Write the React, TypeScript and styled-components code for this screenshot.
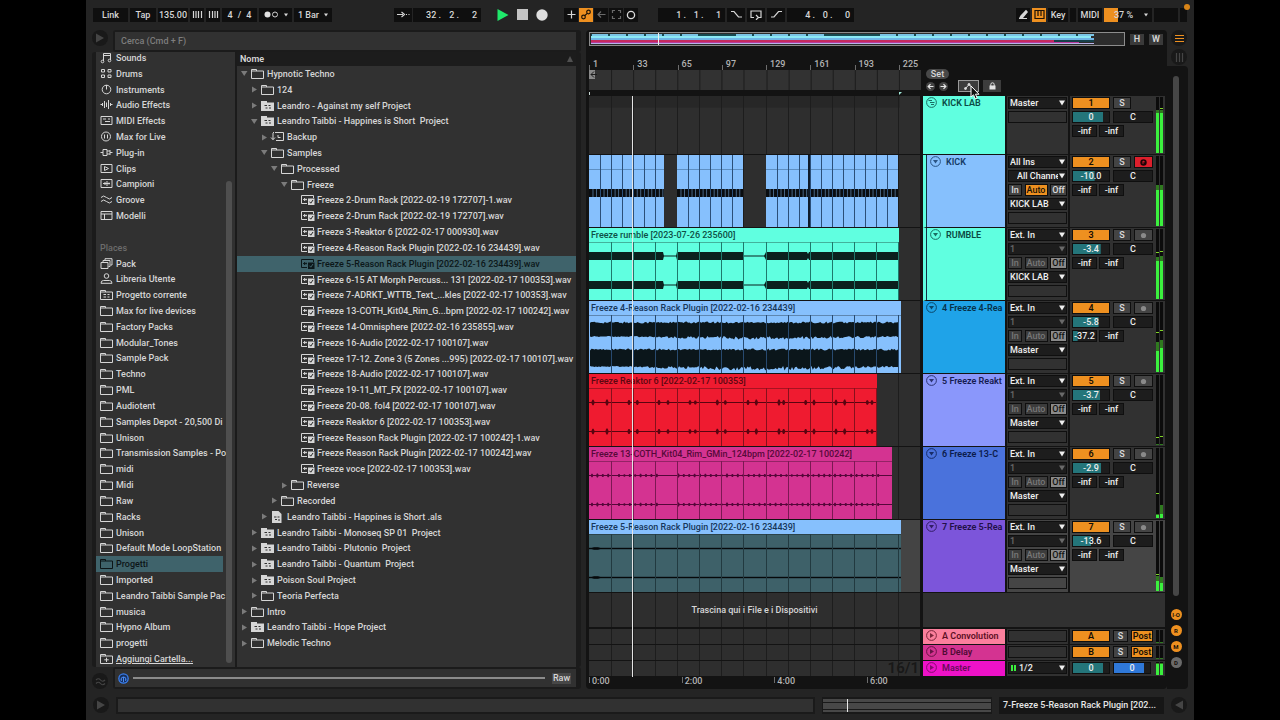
import React from "react";
import styled, { createGlobalStyle, css } from "styled-components";

const c = {
  page: "#242424",
  well: "#161616",
  deep: "#0f0f0f",
  surface: "#313131",
  line: "#191919",
  text: "#d6d6d6",
  dim: "#6c6c6c",
  orange: "#ee9020",
  teal: "#24757a",
  select: "#3f636b",
};

const Global = createGlobalStyle`
  * { box-sizing: border-box; }
  html, body { margin: 0; background: #000; }
  body, button, input, select {
    font-family: Roboto, "Liberation Sans", sans-serif;
    font-size: 9px;
    line-height: 12px;
    font-weight: 500;
    color: ${c.text};
  }
  button, input, select { border: 0; margin: 0; padding: 0; background: none; border-radius: 0; appearance: none; outline: 0; }
  ul { list-style: none; margin: 0; padding: 0; }
  a { color: inherit; text-decoration: none; }
  svg { display: block; flex: none; }
`;

const Page = styled.div`
  background: #000;
  min-height: 100vh;
  padding: 0 86px;
  display: flex;
`;
const Window = styled.div`
  flex: 1;
  min-width: 0;
  background: ${c.page};
  display: flex;
  flex-direction: column;
  position: relative;
`;

/* ---------- Transport bar ---------- */
const Toolbar = styled.header`
  height: 29px;
  padding: 0 7px;
  display: flex;
  align-items: center;
`;
const Group = styled.div<{ $gap?: number; $before?: string }>`
  display: flex;
  align-items: center;
  gap: ${(p) => p.$gap ?? 2}px;
  margin-left: ${(p) => p.$before ?? 0};
`;
const ToolButton = styled.button<{ $w: number; $on?: boolean; $dim?: boolean }>`
  width: ${(p) => p.$w}px;
  height: 14px;
  display: flex;
  align-items: center;
  justify-content: center;
  gap: 5px;
  background: ${(p) => (p.$on ? c.orange : c.deep)};
  color: ${(p) => (p.$on ? "#1c1206" : p.$dim ? "#6a6a6a" : "#d6d6d6")};
`;
const Position = styled.div<{ $w: number }>`
  width: ${(p) => p.$w}px;
  height: 14px;
  padding: 0 4px 0 0;
  background: ${c.deep};
  display: grid;
  grid-template-columns: 28px 1fr 1fr;
  align-items: center;
  text-align: right;
`;
const Bare = styled.button`
  display: flex;
`;
const Cpu = styled.div`
  width: 48px;
  height: 14px;
  padding: 0 4px 0 10px;
  display: flex;
  align-items: center;
  justify-content: space-between;
  background: linear-gradient(${c.orange}, ${c.orange}) left / 14px 100% no-repeat ${c.deep};
`;
const Led = styled.span`
  position: absolute;
  top: 4px;
  right: 4px;
  width: 6px;
  height: 6px;
  border-radius: 50%;
  background: #d98518;
`;

/* ---------- Browser ---------- */
const Main = styled.main`
  flex: 1;
  display: flex;
  gap: 5px;
  padding: 1px 6px 0;
  min-height: 0;
`;
const Browser = styled.section`
  width: 489px;
  flex: none;
  display: flex;
  flex-direction: column;
  padding-bottom: 4px;
`;
const BarRow = styled.div<{ $end?: boolean }>`
  display: flex;
  gap: 5px;
  align-items: ${(p) => (p.$end ? "flex-end" : "flex-start")};
`;
const RoundButton = styled.button<{ $lit?: boolean }>`
  width: 16px;
  height: 16px;
  border-radius: 50%;
  background: #191919;
  color: ${(p) => (p.$lit ? c.orange : "#454545")};
  display: flex;
  align-items: center;
  justify-content: center;
  flex: none;
`;
const BarWell = styled.div`
  flex: 1;
  background: #1b1b1b;
  border-radius: 3px;
  padding: 2px 5px 2px 2px;
  display: flex;
`;
const Search = styled.input`
  flex: 1;
  height: 18px;
  padding: 0 6px;
  background: ${c.surface};
  &::placeholder { color: #7d7d7d; opacity: 1; }
`;
const BrowserBody = styled.div`
  flex: 1;
  display: flex;
  gap: 2px;
  padding: 0 5px 0 4px;
  background: #1b1b1b;
  border-radius: 3px;
`;
const Sidebar = styled.nav`
  width: 139px;
  background: ${c.surface};
  overflow: hidden;
  display: flex;
  gap: 3px;
`;
const PlaceList = styled.ul`
  width: 127px;
  margin-top: -2px;
  display: grid;
  grid-template-rows: repeat(39, minmax(12px, 1fr));
`;
const Place = styled.li<{ $on?: boolean; $head?: boolean }>`
  display: flex;
  align-items: center;
  padding: 0 3px 0 4px;
  min-width: 0;
  background: ${(p) => (p.$on ? c.select : "none")};
  color: ${(p) => (p.$on ? "#0d1517" : p.$head ? c.dim : c.text)};
`;
const PlaceLink = styled.a<{ $underline?: boolean }>`
  display: flex;
  align-items: center;
  gap: 3px;
  min-width: 0;
  white-space: nowrap;
  span { text-decoration: ${(p) => (p.$underline ? "underline" : "none")}; }
`;
const SideScroll = styled.div`
  width: 6px;
  margin: 129px 0 4px;
  border-radius: 3px;
  background: #4f4f4f;
`;
const Files = styled.div`
  flex: 1;
  min-width: 0;
  background: ${c.surface};
  display: flex;
  flex-direction: column;
`;
const FilesHead = styled.div`
  height: 14px;
  padding: 0 3px;
  display: flex;
  align-items: center;
  justify-content: space-between;
  background: #1c1c1c;
  font-weight: 600;
`;
const Tree = styled.ul`
  flex: 1;
  display: grid;
  grid-template-rows: repeat(38, minmax(12px, 1fr));
`;
const TreeRow = styled.li<{ $level: number; $on?: boolean }>`
  display: flex;
  align-items: center;
  padding-left: ${(p) => 4 + p.$level * 10}px;
  white-space: pre;
  background: ${(p) => (p.$on ? c.select : "none")};
  color: ${(p) => (p.$on ? "#0c1719" : c.text)};
`;
const Twisty = styled.button`
  width: 10px;
  height: 10px;
  display: flex;
  align-items: center;
  color: #7b7b7b;
`;
const FileName = styled.button`
  display: flex;
  align-items: center;
  gap: 3px;
  color: inherit;
  white-space: pre;
`;
const Preview = styled.div`
  flex: 1;
  height: 18px;
  padding: 0 5px 0 3px;
  display: flex;
  align-items: center;
  gap: 4px;
  background: ${c.surface};
`;
const PreviewLine = styled.div`
  flex: 1;
  height: 2px;
  margin-right: 3px;
  background: #8b8b8b;
`;
const RawButton = styled.button`
  width: 19px;
  height: 11px;
  line-height: 11px;
  background: #474747;
`;

/* ---------- Arrangement ---------- */
const Arrange = styled.section`
  flex: 1;
  min-width: 0;
  display: flex;
  flex-direction: column;
  background: #131313;
  border-radius: 4px;
  padding: 2px 2px 0 3px;
  margin-bottom: 4px;
`;
const OverviewRow = styled.div`
  display: flex;
  align-items: center;
  gap: 5px;
  padding-right: 2px;
  height: 14px;
`;
const Overview = styled.div`
  flex: 1;
  height: 14px;
  border: 1px solid #8c8c8c;
  background: #2c2c2c;
  overflow: hidden;
  svg { width: 100%; height: 100%; }
`;
const SquareButton = styled.button`
  width: 14px;
  height: 11px;
  line-height: 11px;
  background: #3a3a3a;
  font-weight: 600;
`;
const Columns = styled.div`
  display: grid;
  grid-template-columns: minmax(0, 1fr) 82px 61px 95px;
  column-gap: 2px;
`;
const TopArea = styled(Columns)`
  margin-top: 12px;
  height: 38px;
`;
const RulerCol = styled.div`
  display: flex;
  flex-direction: column;
`;
const Ruler = styled.div`
  display: grid;
  grid-template-columns: repeat(15, 1fr);
  height: 12px;
  color: #b4b4b4;
`;
const RulerMark = styled.span<{ $i: number }>`
  grid-column: ${(p) => p.$i * 2 + 1} / span ${(p) => (p.$i === 7 ? 1 : 2)};
  height: 12px;
  padding-left: 4px;
  line-height: 12px;
  white-space: nowrap;
  background: linear-gradient(#6d6d6d, #6d6d6d) left bottom / 1px 5px no-repeat;
`;
const Scrub = styled.div`
  height: 20px;
  position: relative;
  background: #323232;
`;
const GridSvg = styled.svg`
  position: absolute;
  inset: 0;
  width: 100%;
  height: 100%;
`;
const LoopMark = styled.span`
  position: absolute;
  left: 0;
  top: 0;
`;
const EndMarks = styled.div`
  height: 6px;
  padding-top: 2px;
  display: flex;
  justify-content: space-between;
  margin-right: 19px;
`;
const SetArea = styled.div`
  grid-column: 2 / span 3;
  padding: 11px 0 0 3px;
  display: flex;
  flex-direction: column;
  gap: 1px;
`;
const SetButton = styled.button`
  align-self: flex-start;
  width: 23px;
  height: 10px;
  line-height: 10px;
  border-radius: 5px;
  background: #484848;
`;
const SetRow = styled.div`
  display: flex;
  align-items: center;
  gap: 4px;
`;
const NavDot = styled.button`
  width: 9px;
  height: 9px;
  border-radius: 50%;
  background: #444;
  display: flex;
  align-items: center;
  justify-content: center;
`;
const ModeButton = styled.button<{ $on?: boolean }>`
  width: ${(p) => (p.$on ? 21 : 18)}px;
  height: 12px;
  margin-left: ${(p) => (p.$on ? 6 : 0)}px;
  border: ${(p) => (p.$on ? "1px solid #9a9a9a" : "0")};
  background: #3c3c3c;
  display: flex;
  align-items: center;
  justify-content: center;
  position: relative;
`;
const Cursor = styled.span`
  position: absolute;
  left: 11px;
  top: 4px;
  z-index: 5;
`;
const Tracks = styled.div`
  position: relative;
  flex: 1;
  display: flex;
  flex-direction: column;
`;
const TrackRow = styled(Columns)<{ $h: number }>`
  min-height: ${(p) => p.$h}px;
  padding-bottom: 1px;
`;
const Lane = styled.div<{ $sel?: boolean }>`
  position: relative;
  margin-right: 1px;
  background: ${(p) => (p.$sel ? "#444" : "#2e2e2e")};
`;
const GhostClips = styled.div`
  width: 94%;
  height: 12px;
  border-bottom: 1px solid #292929;
  background: #272727;
`;
const Clip = styled.div<{ $bars: number; $bg: string }>`
  position: relative;
  width: ${(p) => (p.$bars / 331) * 100}%;
  height: 100%;
  display: flex;
  flex-direction: column;
  background: ${(p) => p.$bg};
`;
const ClipTitle = styled.div<{ $bg?: string; $ink: string }>`
  height: 14px;
  padding: 0 2px;
  line-height: 14px;
  white-space: nowrap;
  overflow: hidden;
  color: ${(p) => p.$ink};
  background: ${(p) => p.$bg ?? "none"};
  box-shadow: 0 1px 0 rgba(0, 0, 0, 0.3);
`;
const ClipBody = styled.div`
  flex: 1;
  min-height: 0;
  position: relative;
`;
const Head = styled.div<{ $bg: string; $nested?: boolean; $ink: string }>`
  background: ${(p) => p.$bg};
  color: ${(p) => p.$ink};
  margin-bottom: ${(p) => (p.$nested ? -1 : 0)}px;
  ${(p) =>
    p.$nested &&
    css`
      border-left: 3px solid #5effe0;
      box-shadow: inset 1px 0 0 #134;
      border-bottom: 1px solid #131313;
    `}
  padding: 1px 3px 0 ${(p) => (p.$nested ? 4 : 3)}px;
  display: flex;
  align-items: flex-start;
  gap: 5px;
  overflow: hidden;
  white-space: nowrap;
  font-weight: 600;
`;
const IoCol = styled.div<{ $sel?: boolean }>`
  background: ${(p) => (p.$sel ? "#454545" : c.surface)};
  padding: 1px;
  display: flex;
  flex-direction: column;
  gap: 2px;
`;
const SelectBox = styled.label<{ $off?: boolean; $indent?: boolean }>`
  position: relative;
  height: 12px;
  border: 1px solid ${c.deep};
  background: #1d1d1d;
  display: flex;
  align-items: center;
  color: ${(p) => (p.$off ? "#6a6a6a" : "#f0f0f0")};
  select {
    flex: 1;
    min-width: 0;
    height: 10px;
    line-height: 10px;
    padding-left: ${(p) => (p.$indent ? 8 : 1)}px;
    color: inherit;
    opacity: 1;
    text-overflow: clip;
  }
  svg { margin: 0 1px; }
`;
const EmptyBox = styled.div`
  height: 12px;
  border: 1px solid ${c.deep};
`;
const OutputLevel = styled.span`
  width: 5px;
  height: 6px;
  margin: 0 2px;
  border: solid #3bf03e;
  border-width: 0 2px;
`;
const Monitor = styled.div`
  display: grid;
  grid-template-columns: 14px 23px 17px;
  justify-content: space-between;
  height: 12px;
`;
const MonitorButton = styled.button<{ $state: "plain" | "on" | "off" | "lit" }>`
  height: 12px;
  line-height: 10px;
  border: 1px solid ${c.deep};
  white-space: nowrap;
  background: ${(p) => ({ plain: "#444", on: c.orange, off: "#3c3c3c", lit: "#8a8a8a" })[p.$state]};
  color: ${(p) => ({ plain: "#ddd", on: "#1a1206", off: "#777", lit: "#111" })[p.$state]};
  display: flex;
  justify-content: center;
`;
const MixCol = styled.div<{ $sel?: boolean }>`
  background: ${(p) => (p.$sel ? "#454545" : c.surface)};
  display: flex;
  justify-content: space-between;
  padding: 1px 2px 0 2px;
`;
const MixGrid = styled.div`
  display: grid;
  grid-template-columns: 38px 18px 19px;
  grid-auto-rows: 12px;
  gap: 2px 3px;
  align-content: start;
`;
const MixButton = styled.button<{ $kind?: "on" | "arm" }>`
  height: 12px;
  line-height: 10px;
  border: 1px solid ${c.deep};
  background: ${(p) => (p.$kind === "on" ? c.orange : p.$kind === "arm" ? "#dd1f2c" : "#444")};
  color: ${(p) => (p.$kind ? "#140d04" : "#d8d8d8")};
  font-weight: 600;
  display: flex;
  align-items: center;
  justify-content: center;
`;
const ValueBox = styled.input<{ $fill?: number; $hue?: string; $wide?: boolean }>`
  width: 100%;
  height: 12px;
  line-height: 10px;
  border: 1px solid ${c.deep};
  text-align: center;
  color: #ededed;
  grid-column: ${(p) => (p.$wide ? "span 2" : "auto")};
  background: linear-gradient(${(p) => p.$hue ?? c.teal}, ${(p) => p.$hue ?? c.teal}) left / ${(p) => p.$fill ?? 0}% 100% no-repeat #1d1d1d;
`;
const Sends = styled.div`
  grid-column: 1 / -1;
  display: grid;
  grid-template-columns: 25px 25px;
  gap: 2px;
`;
const Meter = styled.div`
  display: grid;
  grid-template-columns: 3px 3px;
  gap: 1px;
  margin-bottom: 1px;
`;
const MeterBar = styled.span<{ $peak: number; $level: number; $hold: number }>`
  background: linear-gradient(
      to top,
      #3bf03e ${(p) => p.$level}%,
      #2f7a1f ${(p) => p.$level}% ${(p) => p.$peak}%,
      #0b0b0b ${(p) => p.$peak}% ${(p) => p.$hold}%,
      #7fd428 ${(p) => p.$hold}% ${(p) => p.$hold + 1}%,
      #0b0b0b ${(p) => p.$hold + 1}%
    );
`;
const DropRow = styled.div`
  height: 34px;
  display: grid;
  grid-template-columns: minmax(0, 1fr) 242px;
  gap: 2px;
  margin-bottom: 2px;
`;
const DropText = styled.p`
  position: relative;
  margin: 0;
  line-height: 34px;
  text-align: center;
`;
const Panel = styled.div`
  background: ${c.surface};
`;
const ReturnRow = styled(Columns)`
  height: 16px;
  padding-bottom: 1px;
`;
const GridLabel = styled.span`
  position: absolute;
  right: 1px;
  bottom: 0;
  font-size: 15px;
  line-height: 15px;
  font-weight: 600;
  color: #181818;
`;
const ReturnMix = styled.div<{ $master?: boolean }>`
  display: grid;
  grid-template-columns: ${(p) => (p.$master ? "38px 38px" : "38px 15px 22px")};
  gap: 3px;
`;
const ReturnCol = styled(MixCol)`
  padding-top: 1px;
`;
const TimeRuler = styled.div`
  display: grid;
  grid-template-columns: repeat(3, 28%) 1fr;
  margin-right: 245px;
  height: 12px;
  color: #b4b4b4;
`;
const TimeMark = styled.span`
  border-left: 1px solid #6d6d6d;
  height: 6px;
  padding-left: 2px;
  line-height: 9px;
`;
const Playhead = styled.div`
  position: absolute;
  top: 0;
  bottom: 12px;
  left: calc((100% - 244px) * 0.13);
  width: 1px;
  background: #e4e4e4;
`;

/* ---------- Right rail ---------- */
const Rail = styled.aside`
  width: 21px;
  margin-left: -5px;
  margin-bottom: 4px;
  display: flex;
  flex-direction: column;
`;
const RailTop = styled.div`
  height: 36px;
  padding-right: 1px;
  display: flex;
  flex-direction: column;
  align-items: flex-end;
  gap: 3px;
`;
const RailBody = styled.div`
  flex: 1;
  background: #131313;
  border-radius: 0 4px 4px 0;
  display: flex;
  flex-direction: column;
  align-items: center;
  gap: 5px;
  padding: 10px 3px 21px 0;
`;
const RailScroll = styled.div`
  flex: 1;
  width: 6px;
  margin-bottom: 8px;
  border-radius: 3px;
  background: #464646;
`;
const RailToggle = styled.button<{ $on?: boolean }>`
  width: 11px;
  height: 11px;
  border-radius: 50%;
  background: ${(p) => (p.$on ? c.orange : "#6a6a6a")};
  color: #17100a;
  font-size: 6px;
  line-height: 11px;
  font-weight: 700;
`;

/* ---------- Status bar ---------- */
const Status = styled.footer`
  height: 28px;
  padding: 0 7px 4px;
  display: flex;
  align-items: center;
  gap: 7px;
`;
const InfoBox = styled.div`
  flex: 1;
  height: 17px;
  background: ${c.surface};
  border: 2px solid #1a1a1a;
`;
const ClipOverview = styled.div`
  width: 170px;
  height: 17px;
  padding: 2px 1px;
  background: #191919;
  svg { width: 100%; height: 100%; }
`;
const DeviceName = styled.div`
  width: 165px;
  height: 17px;
  padding: 0 4px;
  line-height: 17px;
  background: #161616;
  color: #e6e6e6;
  white-space: nowrap;
`;

/* ---------- Icons ---------- */
type IconKind =
  | "notes" | "drums" | "knob" | "audiofx" | "midifx" | "max" | "plug" | "clips" | "samples" | "groove" | "templates"
  | "pack" | "user" | "current" | "folder" | "project" | "add" | "backup" | "wav" | "als";

const folderPath = "M.5 10.500V1.500H5.500V3M.500 3H12.500V10.500H.500";

const Icon = ({ kind, inverse }: { kind: IconKind; inverse?: boolean }) => {
  const shapes: Record<IconKind, React.ReactNode> = {
    notes: <><path d="M3.500 9V1.500H10.500V8M3.500 3.500H10.500" /><circle cx="2.500" cy="9.500" r="1.300" /><circle cx="9.500" cy="8.500" r="1.300" /></>,
    drums: <path d="M1.500 1.500H4.500V4H1.500ZM8 1.500H11V4H8ZM1.500 7H4.500V9.500H1.500ZM8 7H11V9.500H8Z" />,
    knob: <><circle cx="6.500" cy="5.500" r="4.300" /><path d="M6.500 1V5.500" /></>,
    audiofx: <path d="M.5 5.500H2.500M2.500 4V7M4.500 2V9M6.500 3.500V8M8.500 1V10M10.500 4V7M10.500 5.500H12.500" />,
    midifx: <path d="M1 1.500H12V9.500H1ZM3 4H6M5 6.500H10M8 4H10" />,
    max: <path d="M1.500 5.500A4.500 4.500 0 0 1 10.500 5.500A4.500 4.500 0 0 1 1.500 5.500M4.500 3.500V7.500M7.500 3.500V7.500" />,
    plug: <path d="M.5 5.500H3M3 2.500H7V8.500H3ZM7 4H10M7 7H10M10 3V8M10 5.500H12.500" />,
    clips: <path d="M1 1.500H12V9.500H1ZM4.500 3.500V7.500L8.500 5.500Z" />,
    samples: <path d="M1 1.500H12V9.500H1ZM3 5.500H10M5 4V7M7 3V8M9 4.500V6.500" />,
    groove: <path d="M1 3.500Q3.500 .5 6.500 3.500T12 3.500M1 7.500Q3.500 4.500 6.500 7.500T12 7.500" />,
    templates: <path d="M1 1.500H12V9.500H1ZM1 4H12M4.500 4V9.500" />,
    pack: <path d="M1 4.500H8V10.500H1ZM3 4V2.500H10V8.500H8.500M5 2V.7H12V7H10.500" />,
    user: <><circle cx="6.500" cy="3" r="2.300" /><path d="M1 10.300Q1 7.500 3.500 7.500H9.500Q12 7.500 12 10.300Z" /></>,
    current: <><path d={folderPath} /><path d="M3.500 5.500H6M3.500 8H6M7.500 5.500H9.500M7.500 8H9.500" /></>,
    folder: <path d={folderPath} />,
    project: <><path d="M0 11V1H6V2.500H13V11Z" fill="currentColor" stroke="none" /><path d="M3.500 5.500H6M4.500 8H6.500M7.500 5.500H9.500M8 8H10" stroke="#313131" /></>,
    add: <><path d={folderPath} /><path d="M6.500 4.700V9M4.300 6.800H8.700" /></>,
    backup: <path d="M4 1.500H12.500V9.500H5M7 4V6.500H9.500M2 2V8.500M0 6.500L2 8.700L4 6.500M2 1.500H3" />,
    wav: <><path d="M6 9.500H.5V1.500H12.500V4" /><path d="M2 5.500H6M3.500 4V7M5 4.500V6.500" strokeWidth="0.900" /><rect x="7" y="4.500" width="6.500" height="6.500" fill="currentColor" stroke="none" /><path d="M8.500 7.700L9.800 9.200L12 6" stroke={inverse ? c.select : "#262626"} /></>,
    als: <><path d="M1 0H7.500L10.500 3V12H1Z" fill="currentColor" stroke="none" /><path d="M3 6H5.500M6.500 6H8.500M4 8.500H6M7 9H9" stroke="#313131" /></>,
  };
  return (
    <svg width="13" height="12" viewBox="0 0 13 12" fill="none" stroke="currentColor" strokeWidth="1" overflow="visible" aria-hidden="true">
      {shapes[kind]}
    </svg>
  );
};

const Caret = ({ open }: { open?: boolean }) => (
  <svg width="7" height="7" viewBox="0 0 7 7" fill="currentColor" aria-hidden="true">
    {open ? <path d="M0 1H6.500L3.200 6Z" /> : <path d="M1 .5L6 3.500L1 6.500Z" />}
  </svg>
);
const Down = ({ size = 6 }: { size?: number }) => (
  <svg width={size} height={size} viewBox="0 0 5 5" fill="currentColor" aria-hidden="true">
    <path d="M0 .5H5L2.500 4.500Z" />
  </svg>
);
const PlaySmall = ({ flip }: { flip?: boolean }) => (
  <svg width="10" height="10" viewBox="0 0 10 10" fill="currentColor" aria-hidden="true">
    <path d={flip ? "M9 .5L1 5L9 9.500Z" : "M1 .5L9 5L1 9.500Z"} />
  </svg>
);
const TrackFold = ({ kind }: { kind: "group" | "down" | "right" }) => (
  <svg width="11" height="11" viewBox="0 0 11 11" fill="none" stroke="currentColor" strokeWidth="1" opacity="0.800" aria-hidden="true">
    <circle cx="5.500" cy="5.500" r="4.900" />
    {kind === "group" && <path d="M2.500 3.500H6M4 5.500H8.500M5 7.500H8" />}
    {kind === "down" && <path d="M3 4H8L5.500 7.500Z" fill="currentColor" stroke="none" />}
    {kind === "right" && <path d="M4 3L8 5.500L4 8Z" fill="currentColor" stroke="none" />}
  </svg>
);
const Glyph = ({ d, w = 11, fill }: { d: string; w?: number; fill?: boolean }) => (
  <svg width={w} height="11" viewBox={`0 0 ${w} 11`} fill={fill ? "currentColor" : "none"} stroke={fill ? "none" : "currentColor"} strokeWidth="1.200" aria-hidden="true">
    <path d={d} />
  </svg>
);

/* ---------- Data ---------- */
type PlaceItem = { icon: IconKind; label: string; on?: boolean };
const categories: PlaceItem[] = [
  { icon: "notes", label: "Sounds" }, { icon: "drums", label: "Drums" }, { icon: "knob", label: "Instruments" },
  { icon: "audiofx", label: "Audio Effects" }, { icon: "midifx", label: "MIDI Effects" }, { icon: "max", label: "Max for Live" },
  { icon: "plug", label: "Plug-in" }, { icon: "clips", label: "Clips" }, { icon: "samples", label: "Campioni" },
  { icon: "groove", label: "Groove" }, { icon: "templates", label: "Modelli" },
];
const places: PlaceItem[] = [
  { icon: "pack", label: "Pack" }, { icon: "user", label: "Libreria Utente" }, { icon: "current", label: "Progetto corrente" },
  ...["Max for live devices", "Factory Packs", "Modular_Tones", "Sample Pack", "Techno", "PML", "Audiotent", "Samples Depot - 20,500 Di",
    "Unison", "Transmission Samples - Po", "midi", "Midi", "Raw", "Racks", "Unison", "Default Mode LoopStation", "Progetti", "Imported",
    "Leandro Taibbi Sample Pac", "musica", "Hypno Album", "progetti"].map((label) => ({ icon: "folder" as IconKind, label, on: label === "Progetti" })),
];

type Node = { level: number; icon: IconKind; label: string; open?: boolean; on?: boolean };
const wavs = [
  "Freeze 2-Drum Rack [2022-02-19 172707]-1.wav", "Freeze 2-Drum Rack [2022-02-19 172707].wav", "Freeze 3-Reaktor 6 [2022-02-17 000930].wav",
  "Freeze 4-Reason Rack Plugin [2022-02-16 234439].wav", "Freeze 5-Reason Rack Plugin [2022-02-16 234439].wav",
  "Freeze 6-15 AT Morph Percuss... 131 [2022-02-17 100353].wav", "Freeze 7-ADRKT_WTTB_Text_...kles [2022-02-17 100353].wav",
  "Freeze 13-COTH_Kit04_Rim_G...bpm [2022-02-17 100242].wav", "Freeze 14-Omnisphere [2022-02-16 235855].wav",
  "Freeze 16-Audio [2022-02-17 100107].wav", "Freeze 17-12. Zone 3 (5 Zones ...995) [2022-02-17 100107].wav",
  "Freeze 18-Audio [2022-02-17 100107].wav", "Freeze 19-11_MT_FX [2022-02-17 100107].wav", "Freeze 20-08. fol4 [2022-02-17 100107].wav",
  "Freeze Reaktor 6 [2022-02-17 100353].wav", "Freeze Reason Rack Plugin [2022-02-17 100242]-1.wav",
  "Freeze Reason Rack Plugin [2022-02-17 100242].wav", "Freeze voce [2022-02-17 100353].wav",
];
const nodes: Node[] = [
  { level: 0, icon: "folder", label: "Hypnotic Techno", open: true },
  { level: 1, icon: "folder", label: "124" },
  { level: 1, icon: "project", label: "Leandro - Against my self Project" },
  { level: 1, icon: "project", label: "Leandro Taibbi - Happines is Short  Project", open: true },
  { level: 2, icon: "backup", label: "Backup" },
  { level: 2, icon: "folder", label: "Samples", open: true },
  { level: 3, icon: "folder", label: "Processed", open: true },
  { level: 4, icon: "folder", label: "Freeze", open: true },
  ...wavs.map((label, i) => ({ level: 5, icon: "wav" as IconKind, label, on: i === 4 })),
  { level: 4, icon: "folder", label: "Reverse" },
  { level: 3, icon: "folder", label: "Recorded" },
  { level: 2, icon: "als", label: "Leandro Taibbi - Happines is Short .als" },
  { level: 1, icon: "project", label: "Leandro Taibbi - Monoseq SP 01  Project" },
  { level: 1, icon: "project", label: "Leandro Taibbi - Plutonio  Project" },
  { level: 1, icon: "project", label: "Leandro Taibbi - Quantum  Project" },
  { level: 1, icon: "project", label: "Poison Soul Project" },
  { level: 1, icon: "folder", label: "Teoria Perfecta" },
  { level: 0, icon: "folder", label: "Intro" },
  { level: 0, icon: "project", label: "Leandro Taibbi - Hope Project" },
  { level: 0, icon: "folder", label: "Melodic Techno" },
];

/* ---------- Waveforms (lane units: 331 across) ---------- */
const CELL = 331 / 15;
const noise = (i: number) => {
  const v = Math.sin(i * 127.1) * 43758.5453;
  return v - Math.floor(v);
};
const GridLines = ({ w = 331, color = "#1d1d1d" }: { w?: number; color?: string }) => (
  <GridSvg viewBox={`0 0 ${w} 10`} preserveAspectRatio="none" aria-hidden="true">
    {Array.from({ length: 14 }, (_, i) => (i + 1) * CELL).filter((x) => x < w).map((x) => (
      <rect key={x} x={Math.round(x)} y="0" width="1" height="10" fill={color} />
    ))}
  </GridSvg>
);
const Wave = ({ w, children }: { w: number; children: React.ReactNode }) => (
  <GridSvg viewBox={`0 0 ${w} 58`} preserveAspectRatio="none" aria-hidden="true">{children}</GridSvg>
);
const denseBand = (w: number, top: number, bottom: number, amp: number, seed: number) => {
  const n = Math.floor(w / 1.5);
  const up: string[] = [];
  const down: string[] = [];
  for (let i = 0; i <= n; i++) {
    const x = ((i / n) * (w - 3) + 1).toFixed(1);
    up.push(`${x} ${(top - noise(i + seed) * 2).toFixed(1)}`);
    const swell = Math.max(0, Math.sin(((i / n) - 0.12) * 3.6)) * amp;
    down.unshift(`${x} ${(bottom + noise(i * 3 + seed) * (1.2 + swell)).toFixed(1)}`);
  }
  return `M${up.join("L")}L${down.join("L")}Z`;
};
const blips = (y: number, xs: number[], h: number, w: number) =>
  xs.map((x, i) => {
    const k = h * (0.6 + noise(i + 3) * 0.4);
    return `M${x - w} ${y}L${x - w / 3} ${y - k}L${x + w / 3} ${y - k}L${x + w} ${y}L${x + w / 3} ${y + k}L${x - w / 3} ${y + k}Z`;
  }).join("");

const RumbleWave = () => (
  <Wave w={310}>
    {[14, 43].map((y) => (
      <g key={y} fill="#0b211e">
        <rect x="0" y={y - 0.5} width="310" height="1" />
        <path d={`M0 ${y - 4}H74L75 ${y}L74 ${y + 4}H0ZM87 ${y}L88 ${y - 4}H154V${y + 4}H88ZM175 ${y}L177 ${y - 4}H218L219 ${y - 2}L220 ${y - 4}H310V${y + 4}H220L219 ${y + 2}L218 ${y + 4}H177Z`} />
      </g>
    ))}
  </Wave>
);
const ReasonWave = () => (
  <Wave w={312}>
    <g fill="#0b161b">
      <path d={denseBand(312, 8.5, 21, 2.5, 1)} />
      <path d={denseBand(312, 35.5, 51, 3.5, 40)} />
    </g>
  </Wave>
);
const hits = [40, 82, 148, 173, 238, 265, 331, 347, 413, 437, 505, 530, 598, 612, 678, 703, 769, 795, 863, 877].map((x) => (x - 28) / 3);
const ReaktorWave = () => (
  <Wave w={288}>
    {[14.5, 43.5].map((y) => (
      <g key={y} fill="#5a0410">
        <rect x="0" y={y - 0.5} width="288" height="1" />
        <path d={blips(y, hits, 3.2, 1.8)} />
      </g>
    ))}
  </Wave>
);
const ticks = Array.from({ length: 54 }, (_, i) => 3 + i * 5.4).filter((x) => (x < 22 || x > 28) && (x < 70 || x > 88));
const RimWave = () => (
  <Wave w={303}>
    {[14.5, 43.5].map((y) => (
      <g key={y} fill="#56073a">
        <rect x="0" y={y - 0.5} width="303" height="1" />
        <path d={blips(y, ticks, 2, 1.5)} />
      </g>
    ))}
  </Wave>
);
const FlatWave = () => (
  <Wave w={312}>
    {[14.5, 43.5].map((y) => (
      <g key={y} fill="#06090a">
        <rect x="0" y={y - 0.7} width="312" height="1.400" />
        <path d={blips(y, [7], 1.5, 6)} />
      </g>
    ))}
  </Wave>
);
const kickGroups: [number, number][] = [[0, 75], [88, 154], [177, 309]];
const KickClips = () => (
  <GridSvg viewBox="0 0 331 72" preserveAspectRatio="none" aria-hidden="true">
    {kickGroups.map(([a, b]) => (
      <g key={a}>
        <rect x={a} y="0" width={b - a} height="72" fill="#86c0fd" />
        <rect x={a} y="14" width={b - a} height="1" fill="#5d8fc2" />
        <rect x={a} y="34" width={b - a} height="8" fill="#0a0d10" />
        {Array.from({ length: Math.floor((b - a) / 3.7) }, (_, i) => (
          <rect key={i} x={a + (i + 1) * 3.68} y="34" width="0.600" height="8" fill="#6f9fd0" />
        ))}
        {Array.from({ length: Math.floor((b - a - 4) / 11) }, (_, i) => (
          <rect key={i} x={Math.round(a + (i + 1) * 11.04)} y="0" width="1" height="72" fill="#2b4f78" />
        ))}
      </g>
    ))}
    <rect x="219" y="0" width="2" height="72" fill="#0f1b2a" />
  </GridSvg>
);
const OverviewDrawing = () => (
  <svg viewBox="0 0 534 12" preserveAspectRatio="none" aria-hidden="true">
    <rect x="1" y="1" width="502" height="2" fill="#174a50" />
    {Array.from({ length: 28 }, (_, i) => i * 18).filter((x) => x < 100 || (x > 130 && x < 230) || x > 280).map((x) => (
      <rect key={x} x={x + 2} y="1" width="16" height="2" fill="#7ac4e6" />
    ))}
    <rect x="1" y="3" width="500" height="2" fill="#8be9f5" />
    <rect x="1" y="5" width="503" height="2" fill="#6fb4e6" />
    <rect x="1" y="7" width="463" height="2" fill="#c42a5e" />
    <rect x="464" y="7" width="40" height="2" fill="#16404a" />
    <rect x="1" y="9" width="488" height="1" fill="#b83a9a" />
    <rect x="1" y="10" width="503" height="1" fill="#b9b3ea" />
    <rect x="68" y="0" width="1" height="12" fill="#f0f0f0" />
  </svg>
);

/* ---------- Tracks ---------- */
type Channel = { level: number; peak: number; hold: number };
type Track = {
  name: string; n: number; color: string; ink: string; h: number; fold: "group" | "down"; nested?: boolean; sel?: boolean;
  input?: string; channel?: string; live?: boolean; output: string; vol: string; fill: number; send?: string; meter: [Channel, Channel];
  clip?: { title: string; w: number; bg: string; head?: string; ink: string; wave: React.ReactNode; grid: string };
};
const tracks: Track[] = [
  { name: "KICK LAB", n: 1, color: "#60ffe0", ink: "#0b4a44", h: 59, fold: "group", output: "Master", vol: "0", fill: 84,
    meter: [{ level: 72, peak: 76, hold: 78 }, { level: 72, peak: 77, hold: 79 }] },
  { name: "KICK", n: 2, color: "#86c0fd", ink: "#143a66", h: 73, fold: "down", nested: true, input: "All Ins", channel: "All Channels", live: true,
    output: "KICK LAB", vol: "-10.0", fill: 60, meter: [{ level: 52, peak: 59, hold: 88 }, { level: 52, peak: 59, hold: 88 }] },
  { name: "RUMBLE", n: 3, color: "#60ffe0", ink: "#0b4a44", h: 73, fold: "down", nested: true, input: "Ext. In", output: "KICK LAB", vol: "-3.4", fill: 77,
    meter: [{ level: 54, peak: 60, hold: 66 }, { level: 54, peak: 62, hold: 67 }],
    clip: { title: "Freeze rumble [2023-07-26 235600]", w: 310, bg: "#60ffe0", ink: "#0e4f47", wave: <RumbleWave />, grid: "#1e7a6c" } },
  { name: "4 Freeze 4-Rea", n: 4, color: "#1fa3e8", ink: "#06314a", h: 73, fold: "down", input: "Ext. In", output: "Master", vol: "-5.8", fill: 71, send: "-37.2",
    meter: [{ level: 30, peak: 43, hold: 56 }, { level: 34, peak: 45, hold: 59 }],
    clip: { title: "Freeze 4-Reason Rack Plugin [2022-02-16 234439]", w: 312, bg: "#86c0fd", ink: "#16365a", wave: <ReasonWave />, grid: "#284a70" } },
  { name: "5 Freeze Reakt", n: 5, color: "#8a97fb", ink: "#161c52", h: 73, fold: "down", input: "Ext. In", output: "Master", vol: "-3.7", fill: 75,
    meter: [{ level: 0, peak: 2, hold: 10 }, { level: 0, peak: 2, hold: 12 }],
    clip: { title: "Freeze Reaktor 6 [2022-02-17 100353]", w: 288, bg: "#ef1b30", ink: "#5c0711", wave: <ReaktorWave />, grid: "#86101c" } },
  { name: "6 Freeze 13-C", n: 6, color: "#4a72dc", ink: "#0c1c4c", h: 73, fold: "down", input: "Ext. In", output: "Master", vol: "-2.9", fill: 78,
    meter: [{ level: 4, peak: 6, hold: 35 }, { level: 5, peak: 18, hold: 34 }],
    clip: { title: "Freeze 13-COTH_Kit04_Rim_GMin_124bpm [2022-02-17 100242]", w: 303, bg: "#d43391", ink: "#560a39", wave: <RimWave />, grid: "#7c1853" } },
  { name: "7 Freeze 5-Rea", n: 7, color: "#7c55da", ink: "#221048", h: 73, fold: "down", sel: true, input: "Ext. In", output: "Master", vol: "-13.6", fill: 50,
    meter: [{ level: 14, peak: 22, hold: 23 }, { level: 12, peak: 20, hold: 21 }],
    clip: { title: "Freeze 5-Reason Rack Plugin [2022-02-16 234439]", w: 312, bg: "#3e6169", head: "#86c0fd", ink: "#16365a", wave: <FlatWave />, grid: "#223a40" } },
];

const Dropdown = ({ value, label, off, indent, lead }: { value: string; label: string; off?: boolean; indent?: boolean; lead?: React.ReactNode }) => (
  <SelectBox $off={off} $indent={indent}>
    {lead}
    <select aria-label={label} defaultValue={value} disabled={off}>
      <option>{value}</option>
    </select>
    <Down />
  </SelectBox>
);

const Meters = ({ data }: { data: [Channel, Channel] }) => (
  <Meter>
    {data.map((m, i) => <MeterBar key={i} $level={m.level} $peak={m.peak} $hold={m.hold} />)}
  </Meter>
);

const TrackView = ({ t }: { t: Track }) => (
  <TrackRow $h={t.h}>
    <Lane $sel={t.sel}>
      {t.n === 1 && <GhostClips />}
      <GridLines />
      {t.n === 2 && <KickClips />}
      {t.clip && (
        <Clip $bars={t.clip.w} $bg={t.clip.bg}>
          <ClipTitle $bg={t.clip.head} $ink={t.clip.ink}>{t.clip.title}</ClipTitle>
          <ClipBody>
            {t.clip.wave}
            <GridLines w={t.clip.w} color={t.clip.grid} />
          </ClipBody>
        </Clip>
      )}
    </Lane>
    <Head $bg={t.color} $ink={t.ink} $nested={t.nested}>
      <TrackFold kind={t.fold} />
      {t.name}
    </Head>
    <IoCol $sel={t.sel}>
      {t.input && (
        <>
          <Dropdown label={`${t.name} input`} value={t.input} />
          <Dropdown label={`${t.name} channel`} value={t.channel ?? "1"} off={!t.live} indent={t.live} />
          <Monitor>
            <MonitorButton $state={t.live ? "plain" : "off"}>In</MonitorButton>
            <MonitorButton $state={t.live ? "on" : "off"}>Auto</MonitorButton>
            <MonitorButton $state={t.live ? "plain" : "lit"}>Off</MonitorButton>
          </Monitor>
        </>
      )}
      <Dropdown label={`${t.name} output`} value={t.output} />
      <EmptyBox />
    </IoCol>
    <MixCol $sel={t.sel}>
      <MixGrid>
        <MixButton $kind="on">{t.n}</MixButton>
        <MixButton>S</MixButton>
        {t.n === 1 ? <span /> : (
          <MixButton $kind={t.live ? "arm" : undefined} aria-label="Arm">
            <svg width="7" height="7" viewBox="0 0 7 7" aria-hidden="true">
              <circle cx="3.500" cy="3.500" r={t.live ? 3.2 : 2.6} fill={t.live ? "#1a0507" : "#8a8a8a"} />
              {t.live && <path d="M3 4.800V2L4.800 3" stroke="#dd1f2c" fill="none" />}
            </svg>
          </MixButton>
        )}
        <ValueBox aria-label="Volume" defaultValue={t.vol} $fill={t.fill} />
        <ValueBox aria-label="Pan" defaultValue="C" $wide />
        <Sends>
          <ValueBox aria-label="Send A" defaultValue={t.send ?? "-inf"} $fill={t.send ? 20 : 0} />
          <ValueBox aria-label="Send B" defaultValue="-inf" />
        </Sends>
      </MixGrid>
      <Meters data={t.meter} />
    </MixCol>
  </TrackRow>
);

const quiet: [Channel, Channel] = [{ level: 0, peak: 5, hold: 10 }, { level: 0, peak: 5, hold: 10 }];
const loud: [Channel, Channel] = [{ level: 85, peak: 92, hold: 95 }, { level: 85, peak: 92, hold: 95 }];

const ReturnView = ({ name, id, color, ink }: { name: string; id: string; color: string; ink: string }) => {
  const master = id === "M";
  return (
    <ReturnRow>
      <Lane>
        <GridLines />
        {master && <GridLabel>16/1</GridLabel>}
      </Lane>
      <Head $bg={color} $ink={ink}><TrackFold kind="right" />{name}</Head>
      <IoCol>{master ? <Dropdown label="Master output" value="1/2" lead={<OutputLevel />} /> : <EmptyBox />}</IoCol>
      <ReturnCol>
        <ReturnMix $master={master}>
          {master ? (
            <>
              <ValueBox aria-label="Master volume" defaultValue="0" $fill={84} />
              <ValueBox aria-label="Cue volume" defaultValue="0" $fill={84} $hue="#2f78d8" />
            </>
          ) : (
            <>
              <MixButton $kind="on">{id}</MixButton>
              <MixButton>S</MixButton>
              <MixButton $kind="on">Post</MixButton>
            </>
          )}
        </ReturnMix>
        <Meters data={master ? loud : quiet} />
      </ReturnCol>
    </ReturnRow>
  );
};

const TransportBar = () => (
  <Toolbar>
    <Group>
      <ToolButton $w={35}>Link</ToolButton>
      <ToolButton $w={26}>Tap</ToolButton>
      <ToolButton $w={30}>135.00</ToolButton>
      <ToolButton $w={14} aria-label="Nudge down"><Glyph d="M1.500 2V9M4 2V9M6.500 2V9M9.500 2V9" /></ToolButton>
      <ToolButton $w={14} aria-label="Nudge up"><Glyph d="M1.500 2V9M4.500 2V9M7 2V9M9.500 2V9" /></ToolButton>
      <ToolButton $w={35}><span>4</span><span>/</span><span>4</span></ToolButton>
      <ToolButton $w={33} aria-label="Metronome">
        <svg width="15" height="7" viewBox="0 0 15 7" aria-hidden="true">
          <circle cx="3.500" cy="3.500" r="3" fill="#e2e2e2" />
          <circle cx="11" cy="3.500" r="2.500" fill="none" stroke="#cfcfcf" />
        </svg>
        <Down size={4} />
      </ToolButton>
      <ToolButton $w={38}><span>1 Bar</span><Down size={4} /></ToolButton>
    </Group>
    <Group $gap={16} $before="62px">
      <Group $gap={1}>
        <ToolButton $w={18} aria-label="Follow"><Glyph w={13} d="M0 5.500H6M4.500 3L7.500 5.500L4.500 8M9 5.500H10M11.500 5.500H12.500" /></ToolButton>
        <Position $w={68}><span>32 .</span><span>2 .</span><span>2</span></Position>
      </Group>
      <Group $gap={8}>
        <Bare aria-label="Play"><svg width="12" height="12" viewBox="0 0 12 12"><path d="M0.500 0L11.500 6L.5 12Z" fill="#1fe86a" /></svg></Bare>
        <Bare aria-label="Stop"><svg width="11" height="11" viewBox="0 0 11 11"><path d="M0 0H11V11H0Z" fill="#c4c4c4" /></svg></Bare>
        <Bare aria-label="Record"><svg width="12" height="12" viewBox="0 0 12 12"><circle cx="6" cy="6" r="5.700" fill="#dedede" /></svg></Bare>
      </Group>
      <Group $gap={1}>
        <ToolButton $w={14} aria-label="Overdub"><Glyph d="M5.500 1.500V9.500M1.500 5.500H9.500" /></ToolButton>
        <ToolButton $w={14} $on aria-label="Automation arm">
          <svg width="12" height="11" viewBox="0 0 12 11" fill="none" stroke="currentColor" strokeWidth="1.200"><circle cx="3.500" cy="8" r="1.800" /><circle cx="8.500" cy="3" r="1.800" /><path d="M4.800 6.700L7.200 4.300" /></svg>
        </ToolButton>
        <ToolButton $w={14} $dim aria-label="Re-enable automation"><Glyph d="M9.500 5.500H2M5 2.500L2 5.500L5 8.500" /></ToolButton>
        <ToolButton $w={14} $dim aria-label="Capture MIDI"><Glyph d="M1.500 4V1.500H4M7 1.500H9.500V4M9.500 7V9.500H7M4 9.500H1.500V7" /></ToolButton>
        <ToolButton $w={14} aria-label="Session record"><svg width="10" height="10" viewBox="0 0 10 10"><circle cx="5" cy="5" r="3.600" fill="none" stroke="#dcdcdc" strokeWidth="1.300" /></svg></ToolButton>
      </Group>
    </Group>
    <Group $before="20px">
      <Position $w={67}><span>1 .</span><span>1 .</span><span>1</span></Position>
      <ToolButton $w={18} aria-label="Punch in"><Glyph d="M0 2.500H3L7.500 8H11" /></ToolButton>
      <ToolButton $w={18} aria-label="Loop"><Glyph w={12} d="M4 8.500H1V2H11V8.500H7.500M6 6L8.500 8.500L6 10.800" /></ToolButton>
      <ToolButton $w={18} aria-label="Punch out"><Glyph d="M0 8H3L7.500 2.500H11" /></ToolButton>
      <Position $w={67}><span>4 .</span><span>0 .</span><span>0</span></Position>
    </Group>
    <Group $before="auto">
      <ToolButton $w={14} aria-label="Draw mode"><Glyph d="M1 10H9V9H5L10 3L8 .8L2.500 6.500L1 9.200Z" fill /></ToolButton>
      <ToolButton $w={14} $on aria-label="MIDI keyboard"><Glyph d="M1 1.500H10V9.500H1ZM4 1.500V7M7 1.500V7" /></ToolButton>
      <ToolButton $w={20}>Key</ToolButton>
      <ToolButton $w={6} aria-label="Key in" />
      <ToolButton $w={24}>MIDI</ToolButton>
      <Cpu><span>37 %</span><Down size={4} /></Cpu>
      <ToolButton $w={24} aria-label="Disk" />
      <ToolButton $w={7} aria-label="MIDI out" />
    </Group>
  </Toolbar>
);

const BrowserView = () => (
  <Browser>
    <BarRow>
      <RoundButton aria-label="Hide browser"><PlaySmall /></RoundButton>
      <BarWell><Search type="search" placeholder="Cerca (Cmd + F)" aria-label="Cerca" /></BarWell>
    </BarRow>
    <BrowserBody>
      <Sidebar>
        <PlaceList>
          {categories.map((p) => (
            <Place key={p.label}><PlaceLink href="#"><Icon kind={p.icon} /><span>{p.label}</span></PlaceLink></Place>
          ))}
          <Place aria-hidden="true" />
          <Place $head>Places</Place>
          {places.map((p, i) => (
            <Place key={i} $on={p.on}><PlaceLink href="#"><Icon kind={p.icon} /><span>{p.label}</span></PlaceLink></Place>
          ))}
          <Place><PlaceLink href="#" $underline><Icon kind="add" /><span>Aggiungi Cartella...</span></PlaceLink></Place>
        </PlaceList>
        <SideScroll />
      </Sidebar>
      <Files>
        <FilesHead>Nome
          <svg width="6" height="6" viewBox="0 0 6 6" aria-hidden="true"><path d="M0 6L3 0L6 6Z" fill="#505050" /></svg>
        </FilesHead>
        <Tree>
          {nodes.map((n) => (
            <TreeRow key={n.label} $level={n.level} $on={n.on}>
              {n.icon === "wav" ? <Twisty as="span" /> : <Twisty aria-label="Expand"><Caret open={n.open} /></Twisty>}
              <FileName><Icon kind={n.icon} inverse={n.on} /><span>{n.label}</span></FileName>
            </TreeRow>
          ))}
        </Tree>
      </Files>
    </BrowserBody>
    <BarRow $end>
      <RoundButton aria-label="Groove pool"><Glyph d="M1 4Q3.500 1.500 5.500 4T10 4M1 7.500Q3.500 5 5.500 7.500T10 7.500" /></RoundButton>
      <BarWell>
        <Preview>
          <Bare aria-label="Preview">
            <svg width="11" height="11" viewBox="0 0 11 11"><circle cx="5.500" cy="5.500" r="5.300" fill="#3a7ff0" /><circle cx="5.500" cy="5.500" r="4" fill="#16305e" /><path d="M3 6.500A2.500 2.500 0 0 1 8 6.500M5.500 4V9M3.300 6V8M7.700 6V8" stroke="#4a8cf5" fill="none" /></svg>
          </Bare>
          <PreviewLine />
          <RawButton>Raw</RawButton>
        </Preview>
      </BarWell>
    </BarRow>
  </Browser>
);

const bars = ["1", "33", "65", "97", "129", "161", "193", "225"];

const ArrangeView = () => (
  <Arrange>
    <OverviewRow>
      <Overview><OverviewDrawing /></Overview>
      <SquareButton>H</SquareButton>
      <SquareButton>W</SquareButton>
    </OverviewRow>
    <TopArea>
      <RulerCol>
        <Ruler>
          {bars.map((b, i) => <RulerMark key={b} $i={i}>{b}</RulerMark>)}
        </Ruler>
        <Scrub>
          <GridLines />
          <LoopMark>
            <svg width="8" height="9" viewBox="0 0 8 9" aria-hidden="true"><path d="M0 0H6V9H0Z" fill="#8a8a8a" /><path d="M5 1.500L2 4.500L5 7.500M2 4.500H8" stroke="#1c1c1c" fill="none" /></svg>
          </LoopMark>
        </Scrub>
        <EndMarks aria-hidden="true">
          <svg width="1" height="3" viewBox="0 0 1 3"><path d="M0 0H1V3H0Z" fill="#c8d8d4" /></svg>
          <svg width="3" height="3" viewBox="0 0 3 3"><path d="M0 0H3L0 3Z" fill="#9fe8d8" /></svg>
        </EndMarks>
      </RulerCol>
      <SetArea>
        <SetButton>Set</SetButton>
        <SetRow>
          <NavDot aria-label="Previous locator"><svg width="7" height="7" viewBox="0 0 7 7" fill="none" stroke="#e8e8e8" strokeWidth="1.200"><path d="M6.500 3.500H1.500M3.500 1.200L1.200 3.500L3.500 5.800" /></svg></NavDot>
          <NavDot aria-label="Next locator"><svg width="7" height="7" viewBox="0 0 7 7" fill="none" stroke="#e8e8e8" strokeWidth="1.200"><path d="M.5 3.500H5.500M3.500 1.200L5.800 3.500L3.500 5.800" /></svg></NavDot>
          <ModeButton $on aria-label="Automation mode">
            <svg width="9" height="7" viewBox="0 0 9 7" fill="#ddd" stroke="#ddd"><path d="M1.500 5.500L5 1.500L8 4" fill="none" /><circle cx="1.500" cy="5.500" r="1" /><circle cx="5" cy="1.500" r="1" /></svg>
            <Cursor>
              <svg width="10" height="15" viewBox="0 0 10 15"><path d="M1 1V12L3.500 9.800L5.200 13.800L7.200 13L5.500 9.200H9Z" fill="#111" stroke="#fff" /></svg>
            </Cursor>
          </ModeButton>
          <ModeButton aria-label="Lock envelopes">
            <svg width="7" height="8" viewBox="0 0 7 8"><path d="M.5 3.500H6.500V7.500H.500Z" fill="#e2e2e2" /><path d="M1.800 4V2.500A1.700 1.700 0 0 1 5.200 2.500V4" stroke="#e2e2e2" fill="none" /></svg>
          </ModeButton>
        </SetRow>
      </SetArea>
    </TopArea>
    <Tracks>
      {tracks.map((t) => <TrackView key={t.n} t={t} />)}
      <DropRow>
        <Lane><GridLines /><DropText>Trascina qui i File e i Dispositivi</DropText></Lane>
        <Panel />
      </DropRow>
      <ReturnView id="A" name="A Convolution" color="#fb7f9c" ink="#5e1024" />
      <ReturnView id="B" name="B Delay" color="#d43391" ink="#4f0b34" />
      <ReturnView id="M" name="Master" color="#ee12c8" ink="#6b0a5a" />
      <TimeRuler>
        {["0:00", "2:00", "4:00", "6:00"].map((t) => <TimeMark key={t}>{t}</TimeMark>)}
      </TimeRuler>
      <Playhead />
    </Tracks>
  </Arrange>
);

const RailView = () => (
  <Rail>
    <RailTop>
      <RoundButton $lit aria-label="Arrangement view"><Glyph d="M1 2.500H10M1 5.500H10M1 8.500H10" /></RoundButton>
      <RoundButton aria-label="Session view"><Glyph d="M2.500 1V10M5.500 1V10M8.500 1V10" /></RoundButton>
    </RailTop>
    <RailBody>
      <RailScroll />
      <RailToggle $on>I·O</RailToggle>
      <RailToggle $on>R</RailToggle>
      <RailToggle $on>M</RailToggle>
      <RailToggle>D</RailToggle>
    </RailBody>
  </Rail>
);

export default function App() {
  return (
    <>
      <Global />
      <Page>
        <Window>
          <TransportBar />
          <Led />
          <Main>
            <BrowserView />
            <ArrangeView />
            <RailView />
          </Main>
          <Status>
            <RoundButton aria-label="Show info"><PlaySmall /></RoundButton>
            <InfoBox />
            <ClipOverview>
              <svg viewBox="0 0 168 13" preserveAspectRatio="none" aria-hidden="true">
                <path d="M0 0H168V3H0ZM0 4H168V10H0ZM0 11H168V13H0Z" fill="#484848" />
                <rect x="24" width="1" height="13" fill="#e8e8e8" />
              </svg>
            </ClipOverview>
            <DeviceName>7-Freeze 5-Reason Rack Plugin [202...</DeviceName>
            <RoundButton aria-label="Show detail"><PlaySmall flip /></RoundButton>
          </Status>
        </Window>
      </Page>
    </>
  );
}
